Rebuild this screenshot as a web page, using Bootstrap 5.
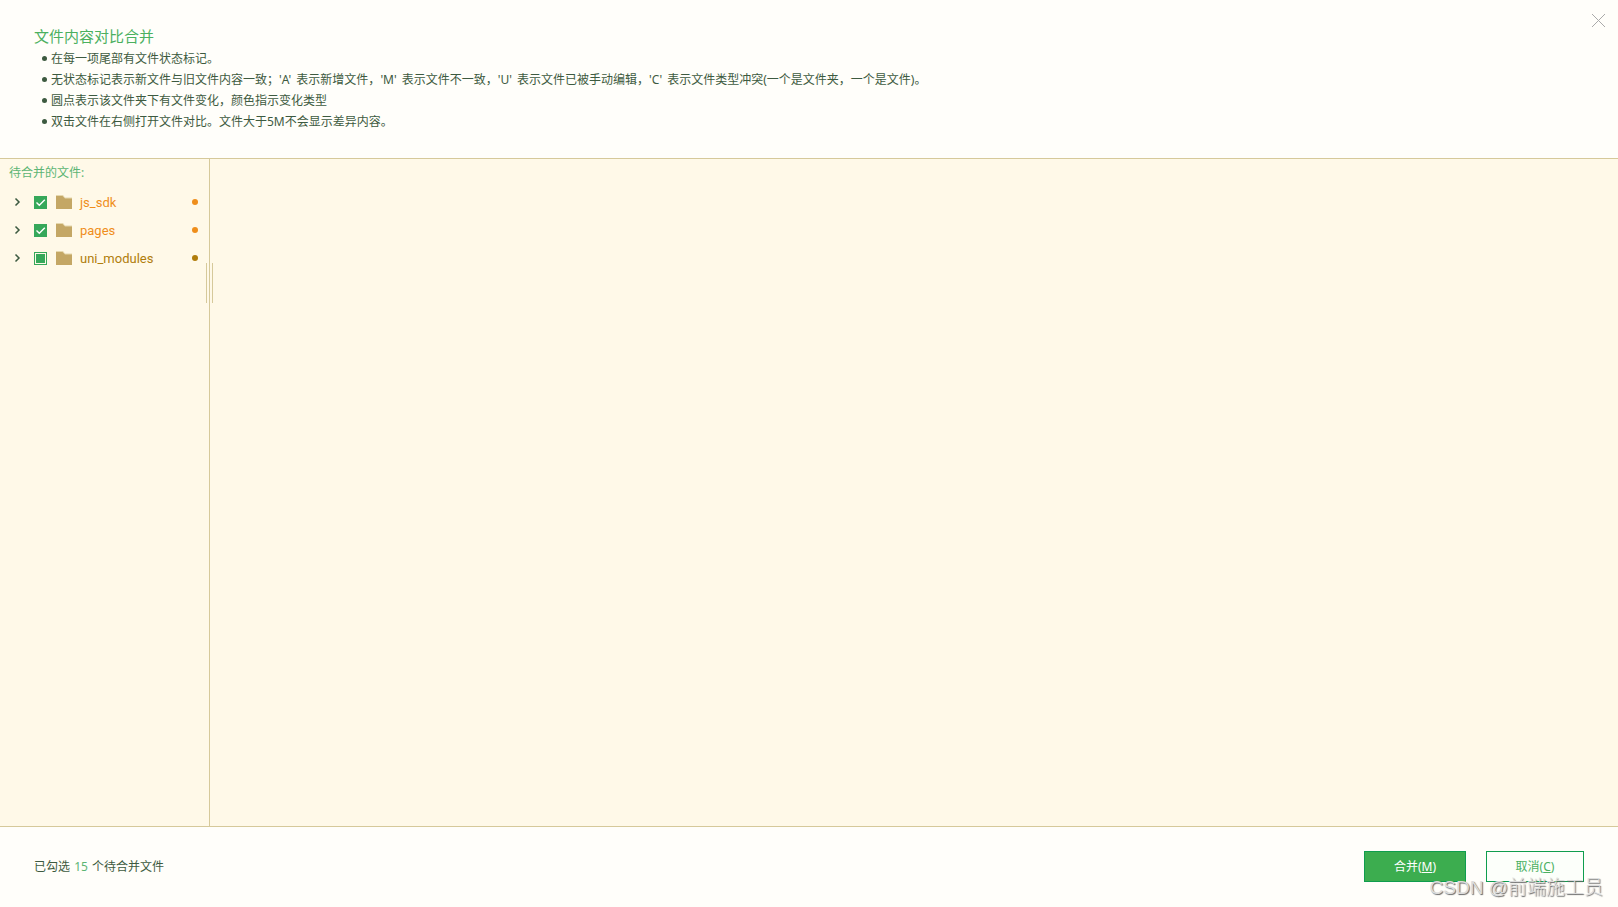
<!DOCTYPE html>
<html lang="zh-CN">
<head>
<meta charset="utf-8">
<meta name="viewport" content="width=device-width, initial-scale=1">
<title>文件内容对比合并</title>
<link href="https://cdn.jsdelivr.net/npm/bootstrap@5.3.0/dist/css/bootstrap.min.css" rel="stylesheet">
<style>
  :root { --line: #d6c99a; --green: #3cad4f; --edge: #0f9d4e; --ink: #3d5a40; }
  body { font: 12px/21px "Noto Sans", "Noto Sans CJK SC", sans-serif; color: var(--ink); background: #fffefa; }
  .intro { padding: 25px 34px 26px; border-bottom: 1px solid var(--line); }
  .intro h1 { font-size: 15px; line-height: 22px; font-weight: 400; color: #4bb05f; padding-bottom: 1px; }
  .notes li { padding-left: 17px; }
  .notes li::before { content: ""; position: absolute; left: 8px; top: 8px; width: 5px; height: 5px; border-radius: 50%; background: var(--ink); }
  .flag { margin-right: 2px; }
  .close-x { top: 12px; right: 11px; width: 17px; height: 17px; color: #aaa; }
  .workspace { background: #fff9e8; }
  .sidebar { width: 210px; border-right: 1px solid var(--line); }
  .sidebar h2 { font-size: 12px; line-height: 21px; font-weight: 400; color: #5cb574; padding: 3px 9px 0; }
  .tree { padding-top: 5px; font-size: 13px; font-family: Roboto, "Noto Sans CJK SC", sans-serif; }
  .tree li { height: 28px; padding: 0 11px 0 13px; color: #ef8e1b; }
  .tree li.partial { color: #b07d0c; }
  .twist { width: 10px; height: 14px; color: #3d5a40; }
  .tree .form-check-input { width: 13px; height: 13px; border-radius: 0; margin: 1px 9px 0 11px; border: 1px solid #36a85a; background-size: 13px 13px; box-shadow: none; }
  .tree .form-check-input:checked { background-color: #36a85a; background-image: url("data:image/svg+xml,%3Csvg xmlns='http://www.w3.org/2000/svg' viewBox='0 0 13 13'%3E%3Cpath d='M2.5 6.5 5.3 9.2 10.8 3.8' fill='none' stroke='white' stroke-width='1.4'/%3E%3C/svg%3E"); }
  .tree .form-check-input:indeterminate { background: #36a85a; border-color: #36a85a; box-shadow: inset 0 0 0 1px #fff9e8; }
  .tree label { padding-left: 8px; }
  .dot { width: 6px; height: 6px; border-radius: 50%; background: currentColor; }
  .grip { top: 104px; right: -4px; width: 7px; height: 40px; border: solid var(--line); border-width: 0 1px; cursor: col-resize; }
  .actions { height: 81px; padding: 0 34px 2px; gap: 20px; border-top: 1px solid var(--line); }
  .count { color: #5cb574; margin: 0 1px; }
  .actions .btn { --bs-btn-font-size: 12px; --bs-btn-border-radius: 0; --bs-btn-border-color: var(--edge); --bs-btn-hover-border-color: var(--edge); --bs-btn-padding-y: 4px; --bs-btn-padding-x: 0; line-height: 21px; }
  .actions .btn-merge { width: 102px; --bs-btn-bg: var(--green); --bs-btn-color: #fff; --bs-btn-hover-bg: #36a048; --bs-btn-hover-color: #fff; }
  .actions .btn-cancel { width: 98px; --bs-btn-bg: #fcfffa; --bs-btn-color: #4bb05f; --bs-btn-hover-bg: #f0faf0; --bs-btn-hover-color: #36a048; }
  .watermark { right: 15px; bottom: 5px; font: 300 19px/28px "Liberation Sans", "Noto Sans CJK SC", sans-serif; color: #dcdcdc; text-shadow: 1px 1px 1px #666; pointer-events: none; }
</style>
</head>
<body class="d-flex flex-column vh-100 position-relative overflow-hidden">
  <header class="intro">
    <h1 class="m-0">文件内容对比合并</h1>
    <ul class="notes list-unstyled m-0">
      <li class="position-relative">在每一项尾部有文件状态标记。</li>
      <li class="position-relative">无状态标记表示新文件与旧文件内容一致；<span class="flag">'A'</span> 表示新增文件，<span class="flag">'M'</span> 表示文件不一致，<span class="flag">'U'</span> 表示文件已被手动编辑，<span class="flag">'C'</span> 表示文件类型冲突(一个是文件夹，一个是文件)。</li>
      <li class="position-relative">圆点表示该文件夹下有文件变化，颜色指示变化类型</li>
      <li class="position-relative">双击文件在右侧打开文件对比。文件大于5M不会显示差异内容。</li>
    </ul>
    <button type="button" class="close-x position-absolute border-0 bg-transparent p-0 d-flex" aria-label="关闭">
      <svg width="17" height="17" viewBox="0 0 17 17" fill="none" stroke="currentColor"><path d="M2 2 15 15M15 2 2 15"/></svg>
    </button>
  </header>

  <main class="workspace d-flex flex-grow-1">
    <aside class="sidebar position-relative flex-shrink-0">
      <h2 class="m-0">待合并的文件:</h2>
      <ul class="tree list-unstyled m-0">
        <li class="d-flex align-items-center">
          <button type="button" class="twist border-0 bg-transparent p-0 d-flex" aria-label="展开 js_sdk"><svg width="10" height="14" viewBox="0 0 10 14" fill="none" stroke="currentColor" stroke-width="1.5"><path d="M2.5 3.5 6 7 2.5 10.5"/></svg></button>
          <input class="form-check-input flex-shrink-0" type="checkbox" id="f1" checked>
          <svg width="16" height="14" viewBox="0 0 16 14" aria-hidden="true"><path fill="#e6d8ae" d="M0 0h7l2 2.5h7V14H0z"/><path fill="#c4a765" d="M0 1h6.5L9 3.5h7V14H0z"/></svg>
          <label for="f1">js_sdk</label><span class="dot ms-auto"></span>
        </li>
        <li class="d-flex align-items-center">
          <button type="button" class="twist border-0 bg-transparent p-0 d-flex" aria-label="展开 pages"><svg width="10" height="14" viewBox="0 0 10 14" fill="none" stroke="currentColor" stroke-width="1.5"><path d="M2.5 3.5 6 7 2.5 10.5"/></svg></button>
          <input class="form-check-input flex-shrink-0" type="checkbox" id="f2" checked>
          <svg width="16" height="14" viewBox="0 0 16 14" aria-hidden="true"><path fill="#e6d8ae" d="M0 0h7l2 2.5h7V14H0z"/><path fill="#c4a765" d="M0 1h6.5L9 3.5h7V14H0z"/></svg>
          <label for="f2">pages</label><span class="dot ms-auto"></span>
        </li>
        <li class="partial d-flex align-items-center">
          <button type="button" class="twist border-0 bg-transparent p-0 d-flex" aria-label="展开 uni_modules"><svg width="10" height="14" viewBox="0 0 10 14" fill="none" stroke="currentColor" stroke-width="1.5"><path d="M2.5 3.5 6 7 2.5 10.5"/></svg></button>
          <input class="form-check-input flex-shrink-0" type="checkbox" id="f3">
          <svg width="16" height="14" viewBox="0 0 16 14" aria-hidden="true"><path fill="#e6d8ae" d="M0 0h7l2 2.5h7V14H0z"/><path fill="#c4a765" d="M0 1h6.5L9 3.5h7V14H0z"/></svg>
          <label for="f3">uni_modules</label><span class="dot ms-auto"></span>
        </li>
      </ul>
      <div class="grip position-absolute"></div>
    </aside>
    <section class="flex-grow-1" aria-label="文件对比"></section>
  </main>

  <footer class="actions d-flex align-items-center">
    <span class="me-auto">已勾选 <span class="count">15</span> 个待合并文件</span>
    <button type="button" class="btn btn-merge">合并(<u>M</u>)</button>
    <button type="button" class="btn btn-cancel">取消(<u>C</u>)</button>
  </footer>
  <div class="watermark position-absolute">CSDN @前端施工员</div>

<script src="https://cdn.jsdelivr.net/npm/bootstrap@5.3.0/dist/js/bootstrap.bundle.min.js"></script>
<script>document.getElementById('f3').indeterminate = true;</script>
</body>
</html>
